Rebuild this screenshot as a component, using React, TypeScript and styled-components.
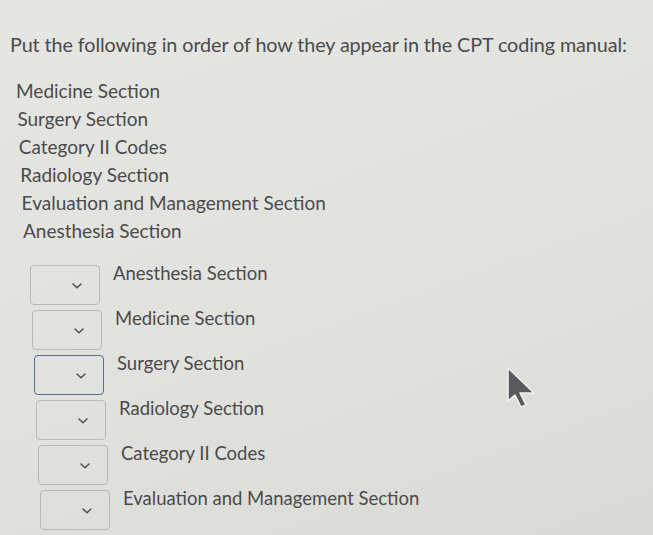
import React from 'react';
import styled, { createGlobalStyle } from 'styled-components';

const GlobalStyle = createGlobalStyle`
  html, body {
    margin: 0;
    padding: 0;
  }
  body {
    font-family: Lato, "Liberation Sans", sans-serif;
    color: #4b4b4b;
    background: #e1e1de;
  }
`;

const Page = styled.div`
  position: relative;
  width: 653px;
  height: 535px;
  overflow: hidden;
  background: linear-gradient(160deg, #e6e6e3 0%, #e1e1de 55%, #dadad6 100%);
`;

const Question = styled.div`
  padding: 31px 0 0 10px;
  font-size: 19.8px;
  line-height: 26px;
  letter-spacing: -0.1px;
`;

const Options = styled.div`
  display: flex;
  flex-direction: column;
  margin-top: 20px;
`;

const Option = styled.div<{ $indent: number }>`
  padding-left: ${p => p.$indent}px;
  font-size: 19px;
  line-height: 28px;
  height: 28px;
`;

const Answers = styled.div`
  display: flex;
  flex-direction: column;
  gap: 5px;
  margin-top: 20px;
`;

const Row = styled.div<{ $indent: number }>`
  display: flex;
  align-items: flex-start;
  gap: 13px;
  padding-left: ${p => p.$indent}px;
`;

const Select = styled.div<{ $focused?: boolean }>`
  box-sizing: border-box;
  width: 70px;
  height: 40px;
  border: 1px solid ${p => (p.$focused ? '#5c6a98' : '#b9b9b6')};
  border-radius: 4px;
  display: flex;
  align-items: center;
  justify-content: flex-end;
  padding-right: 17px;
  padding-top: 2px;
`;

const Label = styled.span`
  font-size: 18.5px;
  line-height: 18px;
  margin-top: -1px;
`;

const Cursor = styled.svg`
  position: absolute;
  left: 506px;
  top: 366px;
`;

const Chevron = () => (
  <svg width="10" height="6" viewBox="0 0 10 6">
    <path d="M1 1 L5 4.8 L9 1" fill="none" stroke="#4f4f4f" strokeWidth="1.5" strokeLinecap="round" strokeLinejoin="round" />
  </svg>
);

const options = [
  'Medicine Section',
  'Surgery Section',
  'Category II Codes',
  'Radiology Section',
  'Evaluation and Management Section',
  'Anesthesia Section',
];

const answers = [
  'Anesthesia Section',
  'Medicine Section',
  'Surgery Section',
  'Radiology Section',
  'Category II Codes',
  'Evaluation and Management Section',
];

export default function App() {
  return (
    <Page>
      <GlobalStyle />
      <Question>Put the following in order of how they appear in the CPT coding manual:</Question>
      <Options>
        {options.map((o, i) => (
          <Option key={o} $indent={16 + i * 1.4}>{o}</Option>
        ))}
      </Options>
      <Answers>
        {answers.map((a, i) => (
          <Row key={a} $indent={30 + i * 2}>
            <Select $focused={i === 2}>
              <Chevron />
            </Select>
            <Label>{a}</Label>
          </Row>
        ))}
      </Answers>
      <Cursor width="32" height="44" viewBox="0 0 32 44">
        <path d="M2 2 L2 35 L9 29 L15 41 L20 39 L14 27 L28 27 Z" fill="#5a5a5e" stroke="#f2f2f0" strokeWidth="1.5" strokeLinejoin="round" />
      </Cursor>
    </Page>
  );
}
